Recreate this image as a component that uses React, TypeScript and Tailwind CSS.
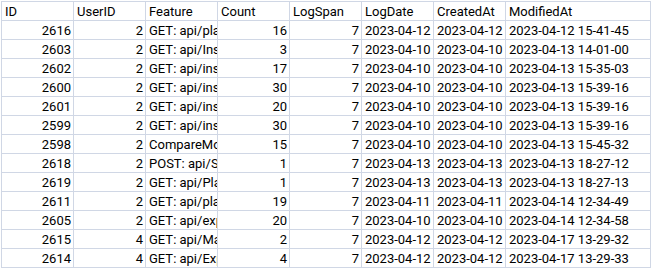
const headers = [
  "ID",
  "UserID",
  "Feature",
  "Count",
  "LogSpan",
  "LogDate",
  "CreatedAt",
  "ModifiedAt",
];

// rows as exported from the usage log
const rows = [
  [2616, 2, "GET: api/plan/list", 16, 7, "2023-04-12", "2023-04-12", "2023-04-12 15-41-45"],
  [2603, 2, "GET: api/Insight/get", 3, 7, "2023-04-10", "2023-04-10", "2023-04-13 14-01-00"],
  [2602, 2, "GET: api/insight/list", 17, 7, "2023-04-10", "2023-04-10", "2023-04-13 15-35-03"],
  [2600, 2, "GET: api/insight/data", 30, 7, "2023-04-10", "2023-04-10", "2023-04-13 15-39-16"],
  [2601, 2, "GET: api/insight/chart", 20, 7, "2023-04-10", "2023-04-10", "2023-04-13 15-39-16"],
  [2599, 2, "GET: api/insight/summary", 30, 7, "2023-04-10", "2023-04-10", "2023-04-13 15-39-16"],
  [2598, 2, "CompareModel", 15, 7, "2023-04-10", "2023-04-10", "2023-04-13 15-45-32"],
  [2618, 2, "POST: api/Save", 1, 7, "2023-04-13", "2023-04-13", "2023-04-13 18-27-12"],
  [2619, 2, "GET: api/Plan", 1, 7, "2023-04-13", "2023-04-13", "2023-04-13 18-27-13"],
  [2611, 2, "GET: api/plan/detail", 19, 7, "2023-04-11", "2023-04-11", "2023-04-14 12-34-49"],
  [2605, 2, "GET: api/export", 20, 7, "2023-04-10", "2023-04-10", "2023-04-14 12-34-58"],
  [2615, 4, "GET: api/Manage", 2, 7, "2023-04-12", "2023-04-12", "2023-04-17 13-29-32"],
  [2614, 4, "GET: api/Export", 4, 7, "2023-04-12", "2023-04-12", "2023-04-17 13-29-33"],
];

function Cell({ value, last }: { value: string | number; last?: boolean }) {
  const isNum = typeof value === "number";
  return (
    <div
      className={`${last ? "w-[145px]" : "w-[72px]"} h-[19px] shrink-0 border-r border-b border-[#d0d7e5] overflow-hidden whitespace-nowrap leading-[19px] ${
        isNum ? "text-right pr-[2px]" : "pl-[3px]"
      }`}
    >
      {value}
    </div>
  );
}

export default function App() {
  return (
    <div className="w-[651px] h-[269px] bg-white overflow-hidden pl-px pt-px font-['Roboto',sans-serif] text-[13px] text-black">
      <div className="border-l border-t border-[#d0d7e5] w-max">
        <div className="flex">
          {headers.map((h, i) => (
            <Cell key={h} value={h} last={i === headers.length - 1} />
          ))}
        </div>
        {rows.map((row, r) => (
          <div key={r} className="flex">
            {row.map((v, i) => (
              <Cell key={i} value={v} last={i === row.length - 1} />
            ))}
          </div>
        ))}
      </div>
    </div>
  );
}
